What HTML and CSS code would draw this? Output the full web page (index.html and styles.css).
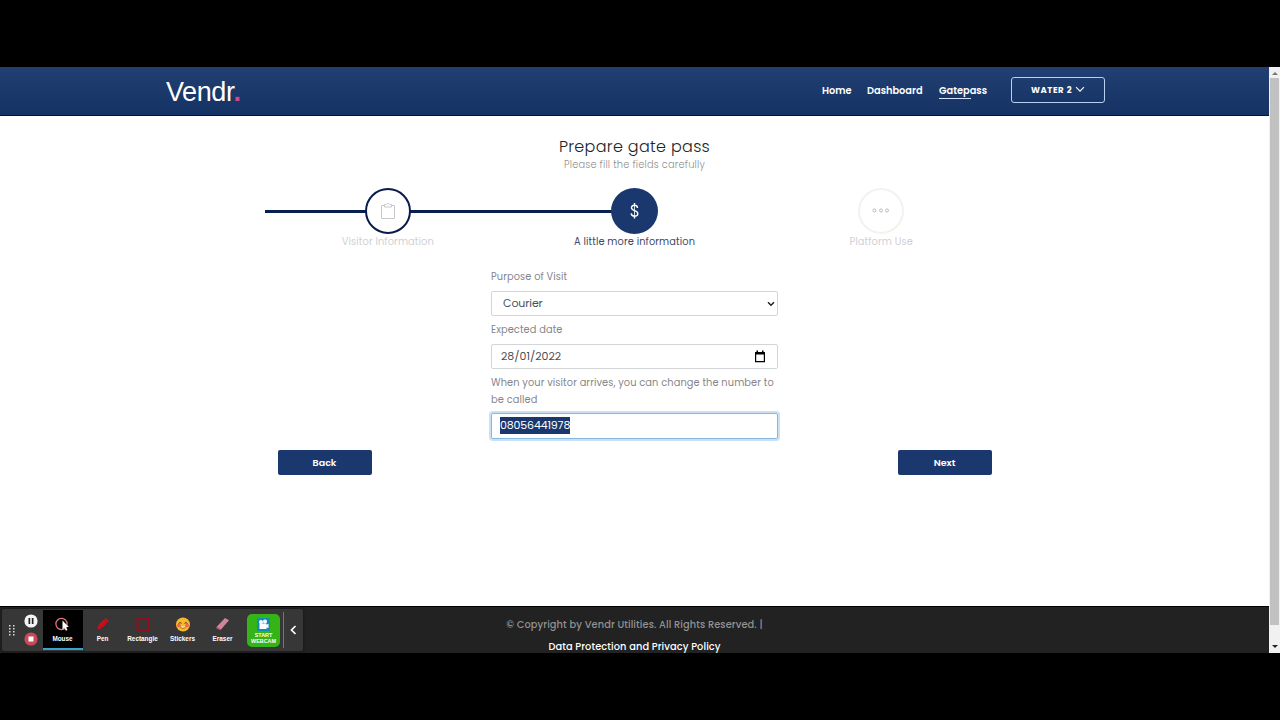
FILE: index.html
```html
<!DOCTYPE html>
<html lang="en">
<head>
    <meta charset="UTF-8">
    <meta name="viewport" content="width=device-width, initial-scale=1.0">
    <title>Vendr - Gatepass</title>
    <link rel="stylesheet" href="styles.css">
</head>
<body>
    <div class="screen">
        <div class="page">
            <header class="navbar">
                <a class="logo">Vendr<span class="logo-dot">.</span></a>
                <nav class="menu">
                    <a class="link-home">Home</a>
                    <a class="link-dashboard">Dashboard</a>
                    <a class="active">Gatepass</a>
                </nav>
                <button class="account"><span>WATER 2</span>
                    <svg width="10" height="7" viewBox="0 0 10 7"><path d="M1 1.2l4 4 4-4" fill="none" stroke="#fff" stroke-width="1.1"/></svg>
                </button>
            </header>

            <main>
                <h1>Prepare gate pass</h1>
                <p class="subtitle">Please fill the fields carefully</p>

                <div class="steps">
                    <div class="step done">
                        <div class="step-track"><div class="circle">
                            <svg width="16" height="18" viewBox="0 0 16 18" fill="none" stroke="#c9c9cb"><path d="M4.500 3.500h-3v13h13v-13h-3M4.500 5V2.500h1.700c.3-1.300 3.300-1.300 3.600 0h1.700V5z"/></svg>
                        </div></div>
                        <span class="step-label">Visitor Information</span>
                    </div>
                    <div class="step current">
                        <div class="step-track"><div class="circle">
                            <svg width="10" height="18" viewBox="0 0 10 18" fill="none" stroke="#fff" stroke-width="1.400"><path d="M4.500 1v2.300M4.500 14.200v2.300M7.500 6C7.300 2.300 1.500 2.500 1.500 5.800c0 3.400 6.300 2.400 6.300 5.900 0 3.300-6.400 3.300-6.600-.3"/><path d="M4.500 3v11.500" stroke-width=".8"/></svg>
                        </div></div>
                        <span class="step-label">A little more information</span>
                    </div>
                    <div class="step">
                        <div class="step-track"><div class="circle">
                            <svg width="18" height="6" viewBox="0 0 18 6" fill="none" stroke="#b9b9bc"><circle cx="2.500" cy="2.500" r="1.500"/><circle cx="9" cy="2.500" r="1.500"/><circle cx="15" cy="2.500" r="1.500"/></svg>
                        </div></div>
                        <span class="step-label">Platform Use</span>
                    </div>
                </div>

                <form class="visit-form">
                    <label>Purpose of Visit</label>
                    <div class="control select">
                        <span>Courier</span>
                        <svg width="8" height="6" viewBox="0 0 8 6"><path d="M1 1.200l3 3 3-3" fill="none" stroke="#222" stroke-width="1.500"/></svg>
                    </div>
                    <label>Expected date</label>
                    <div class="control date">
                        <span>28/01/2022</span>
                        <svg width="12" height="13" viewBox="0 0 12 13"><path d="M1.600 2.500h8.800v9.200H1.600z" fill="none" stroke="#000" stroke-width="1.200"/><path d="M1 2h10v2.500H1zM2.500 .5H4V3H2.500zM8 .5h1.500V3H8z"/></svg>
                    </div>
                    <label>When your visitor arrives, you can change the number to<br>be called</label>
                    <div class="control focused"><span class="selection">08056441978</span></div>
                </form>

                <div class="actions">
                    <button class="btn">Back</button>
                    <button class="btn">Next</button>
                </div>
            </main>

            <footer>
                <p class="copyright">© Copyright by Vendr Utilities. All Rights Reserved. |</p>
                <a class="policy">Data Protection and Privacy Policy</a>
            </footer>
        </div>

        <div class="scrollbar">
            <svg width="6" height="4" viewBox="0 0 6 4"><path d="M0 4l3-3 3 3z" fill="#777"/></svg>
            <div class="thumb"></div>
            <svg width="6" height="4" viewBox="0 0 6 4"><path d="M0 0l3 3 3-3z" fill="#222"/></svg>
        </div>

        <!-- recording tools, float over the page -->
        <div class="recorder">
            <svg class="grip" width="7" height="11" viewBox="0 0 7 11" fill="#ddd"><path d="M0 0h1.500v1.500H0zM4 0h1.500v1.500H4zM0 3h1.500v1.500H0zM4 3h1.500v1.500H4zM0 6h1.500v1.500H0zM4 6h1.500v1.500H4zM0 9h1.500v1.500H0zM4 9h1.500v1.500H4z"/></svg>
            <div class="record-controls">
                <svg width="14" height="14" viewBox="0 0 14 14"><circle cx="7" cy="7" r="6.600" fill="#f4f4f4"/><path d="M4.500 4h1.700v6H4.500zM7.800 4h1.700v6H7.800z" fill="#222"/></svg>
                <svg width="14" height="14" viewBox="0 0 14 14"><circle cx="7" cy="7" r="6.600" fill="#c74a5b"/><path d="M4.500 4.500h5v5h-5z" fill="#fff"/></svg>
            </div>
            <div class="tool selected">
                <svg width="18" height="16" viewBox="0 0 18 16"><circle cx="7.500" cy="8" r="5.600" fill="none" stroke="#e77b7f" stroke-width="1.200"/><path d="M8.500 4.500v9l2-1.800 1.300 3 1.600-.7-1.300-2.900h2.700z" fill="#fff"/></svg>
                <span>Mouse</span>
            </div>
            <div class="tool">
                <svg width="16" height="16" viewBox="0 0 16 16"><path d="M2.500 13.500l1-4.500 7-7 3.300 3-7 7z" fill="#d40d1b"/><path d="M6 10.500l5-5M9 3.500l3.200 3M4 9.500l2.500 2.500" stroke="#8d1821" stroke-width=".8"/></svg>
                <span>Pen</span>
            </div>
            <div class="tool">
                <svg width="16" height="16" viewBox="0 0 16 16"><rect x="2.500" y="2.500" width="11.500" height="11.500" rx=".5" fill="none" stroke="#8e101c" stroke-width="2.200"/></svg>
                <span>Rectangle</span>
            </div>
            <div class="tool">
                <svg width="16" height="16" viewBox="0 0 16 16"><circle cx="8" cy="8.500" r="7" fill="#f5b82e"/><circle cx="3.800" cy="9.500" r="1.800" fill="#ef654a"/><circle cx="12.200" cy="9.500" r="1.800" fill="#ef654a"/><path d="M3.500 7.500q1.500-2 3 0M9.500 7.500q1.500-2 3 0" fill="none" stroke="#68370d"/><path d="M5 10.500q3 3.500 6 0" fill="#fff" stroke="#a34a1c" stroke-width=".9"/></svg>
                <span>Stickers</span>
            </div>
            <div class="tool">
                <svg width="16" height="16" viewBox="0 0 16 16"><path d="M1.500 11L10 2l4 2.300L6 13.500z" fill="#d0839a"/><path d="M1.500 11L6 13.500l-.6.800-4.200-2z" fill="#b85f7b"/></svg>
                <span>Eraser</span>
            </div>
            <div class="webcam">
                <svg width="13" height="13" viewBox="0 0 13 13"><rect width="13" height="13" rx="1" fill="#148db5"/><circle cx="4" cy="4" r="2" fill="#fff"/><circle cx="8" cy="3.500" r="2" fill="#fff"/><path d="M2.500 5.500h7v1.300l2-1v4.500l-2-1V11h-7z" fill="#fff"/></svg>
                <span>START</span>
                <span>WEBCAM</span>
            </div>
            <div class="divider"></div>
            <svg width="7" height="10" viewBox="0 0 7 10"><path d="M5.500 1l-4 4 4 4" fill="none" stroke="#fff" stroke-width="1.700"/></svg>
        </div>
    </div>
</body>
</html>
```

FILE: styles.css
```css
* {
    box-sizing: border-box;
}
body {
    margin: 0;
    padding: 67px 0;
    height: 720px;
    overflow: hidden;
    background: #000;
    font-family: Poppins, Inter, "Open Sans", sans-serif;
    color: #212529;
}
h1, p {
    margin: 0;
}
button {
    font-family: inherit;
}
svg {
    display: block;
    flex: none;
}
.screen {
    position: relative;
    display: flex;
    height: 586px;
    overflow: hidden;
}
.page {
    display: flex;
    flex-direction: column;
    width: 1269px;
    background: #fff;
}

/* navbar */
.navbar {
    display: flex;
    align-items: center;
    height: 49px;
    flex: none;
    padding: 0 164px 2px 166px;
    background: linear-gradient(#213f70, #153264);
    border-bottom: 1px solid #04133d;
    color: #fff;
}
.logo {
    margin-right: auto;
    padding-top: 3px;
    font: 27px/32px "Liberation Sans", sans-serif;
    letter-spacing: -0.4px;
}
.logo-dot {
    margin-left: -1px;
    color: #d54590;
    font-weight: bold;
}
.menu {
    display: flex;
    gap: 16px;
    margin-right: 24px;
    padding-top: 1px;
    font-size: 9.8px;
    font-weight: 600;
    line-height: 17px;
}
.link-home {
    width: 29px;
}
.link-dashboard {
    width: 56px;
}
.active {
    width: 48px;
    background: linear-gradient(#d4e4ff, #d4e4ff) 0 100% / 32px 1px no-repeat;
}
.account {
    display: flex;
    align-items: center;
    justify-content: center;
    gap: 3px;
    width: 94px;
    height: 26px;
    padding: 1px 0 0;
    background: none;
    border: 1px solid #b8cff0;
    border-radius: 3px;
    color: #fff;
    font-size: 8.5px;
    font-weight: 700;
    letter-spacing: 0.6px;
}
.account svg {
    margin-bottom: 2px;
}

/* steps */
main {
    flex: 1;
    padding-top: 21px;
    text-align: center;
}
h1 {
    font-size: 16px;
    font-weight: 300;
    line-height: 20px;
    letter-spacing: 0.3px;
}
.subtitle {
    color: #8f8f8f;
    font-size: 9.8px;
    font-weight: 300;
    line-height: 16px;
    letter-spacing: 0.19px;
}
.steps {
    display: flex;
    width: 740px;
    margin: 15px auto 0;
}
.step {
    flex: 1;
    color: #d0d0d2;
    font-size: 9.8px;
    line-height: 16px;
    letter-spacing: 0.12px;
}
.step-track {
    display: flex;
    justify-content: center;
    align-items: center;
    height: 46px;
}
.done .step-track {
    background: linear-gradient(#071f51, #071f51) 0 50% / 100% 3px no-repeat;
}
.current .step-track {
    background: linear-gradient(#071f51, #071f51) 0 50% / 50% 3px no-repeat;
}
.circle {
    display: flex;
    align-items: center;
    justify-content: center;
    width: 46px;
    height: 46px;
    border: 2px solid #f3f2ed;
    border-radius: 50%;
    background: #fff;
}
.done .circle {
    border-color: #071b4d;
}
.current .circle {
    width: 47px;
    border-color: #1a386d;
    background: #1a386d;
}
.current {
    color: #3c4862;
}

/* form */
.visit-form {
    width: 287px;
    margin: 18px auto 0;
    color: #85858a;
    font-size: 9.8px;
    line-height: 17px;
    letter-spacing: 0.11px;
    text-align: left;
}
.visit-form label {
    display: block;
    white-space: nowrap;
}
.control {
    display: flex;
    align-items: center;
    justify-content: space-between;
    height: 25px;
    margin: 6px 0 5px;
    border: 1px solid #d3d5d8;
    border-radius: 2px;
    color: #495057;
    font-size: 11px;
    letter-spacing: 0;
}
.select {
    padding: 0 2px 0 11px;
}
.select span {
    letter-spacing: -0.1px;
}
.date {
    padding: 0 11px 0 9px;
}
.focused {
    height: 26px;
    margin: 5px 0 0;
    padding: 0 0 1px 8px;
    border-color: #86b7df;
    box-shadow: 0 0 0 2px #c9e1f6;
}
.selection {
    background: #1a386d;
    color: #fff;
    letter-spacing: -0.15px;
}
.actions {
    display: flex;
    justify-content: space-between;
    width: 714px;
    margin: 11px auto 0;
}
.btn {
    width: 94px;
    height: 25px;
    padding: 0;
    border: 0;
    border-radius: 2px;
    background: #1a386d;
    color: #fff;
    font-size: 9.5px;
    font-weight: 600;
}

footer {
    flex: none;
    height: 47px;
    padding-top: 10px;
    border-top: 1px solid #000;
    background: #222;
    color: #929292;
    font-size: 9.8px;
    font-weight: 500;
    line-height: 16px;
    letter-spacing: 0.1px;
    text-align: center;
}
.policy {
    display: block;
    margin-top: 6px;
    color: #fff;
}

.scrollbar {
    display: flex;
    flex-direction: column;
    align-items: center;
    width: 11px;
    padding: 4px 0;
    background: #f1f1f1;
}
.thumb {
    width: 9px;
    height: 547px;
    margin: 3px 0 auto;
    background: #c1c1c1;
}

/* recorder toolbar */
.recorder {
    position: absolute;
    left: 2px;
    bottom: 2px;
    display: flex;
    align-items: center;
    width: 301px;
    height: 42px;
    border-radius: 2px;
    background: #373737;
    box-shadow: 0 0 3px #111;
    color: #fff;
}
.grip {
    margin-left: 7px;
}
.record-controls {
    display: flex;
    flex-direction: column;
    gap: 4px;
    margin: 0 5px 0 7.500px;
}
.tool {
    display: flex;
    flex-direction: column;
    align-items: center;
    gap: 2px;
    width: 40px;
    height: 40px;
    padding-top: 6px;
    font: bold 6.4px/9px "Liberation Sans", sans-serif;
}
.selected {
    background: #000;
    border-bottom: 2px solid #38a3d2;
}
.webcam {
    display: flex;
    flex-direction: column;
    align-items: center;
    width: 33px;
    height: 33px;
    margin-left: 4.500px;
    padding-top: 4px;
    border-radius: 5px;
    background: #35b317;
    font: bold 5.4px/6px "Liberation Sans", sans-serif;
}
.webcam svg {
    margin-bottom: 1px;
}
.divider {
    width: 1px;
    height: 36px;
    margin: 0 6px 0 3px;
    background: #777;
}
```
